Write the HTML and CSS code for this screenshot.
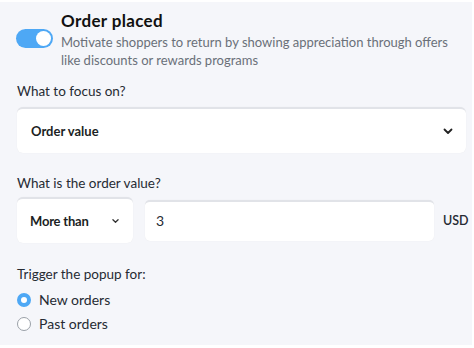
FILE: index.html
```html
<!DOCTYPE html>
<html>
<head>
<meta charset="utf-8">
<link rel="stylesheet" href="styles.css">
</head>
<body>
<div class="panel">
  <div class="header">
    <div class="toggle"><span class="knob"></span></div>
    <div class="head-text">
      <div class="title">Order placed</div>
      <div class="desc">Motivate shoppers to return by showing appreciation through offers like discounts or rewards programs</div>
    </div>
  </div>
  <div class="label l1">What to focus on?</div>
  <div class="select full">
    <span class="sel-text">Order value</span>
    <svg class="chev" width="10" height="7" viewBox="0 0 10 7"><path d="M1.5 1.5 L5 5 L8.5 1.5" fill="none" stroke="#222" stroke-width="1.8" stroke-linecap="round" stroke-linejoin="round"/></svg>
  </div>
  <div class="label l2">What is the order value?</div>
  <div class="row">
    <div class="select small">
      <span class="sel-text">More than</span>
      <svg class="chev" width="9" height="6" viewBox="0 0 10 7"><path d="M2 2 L5 5 L8 2" fill="none" stroke="#333" stroke-width="1.5" stroke-linecap="round" stroke-linejoin="round"/></svg>
    </div>
    <div class="input">3</div>
    <span class="usd">USD</span>
  </div>
  <div class="label l3">Trigger the popup for:</div>
  <div class="radio first"><span class="dot on"></span><span>New orders</span></div>
  <div class="radio"><span class="dot"></span><span>Past orders</span></div>
</div>
</body>
</html>
```
FILE: styles.css
```css
html, body { margin: 0; padding: 0; background: #fff; }
body { font-family: Lato, "Open Sans", sans-serif; color: #262b33; }
.panel {
  margin-top: 2px;
  width: 472px;
  height: 343px;
  background: #f5f6fa;
  box-sizing: border-box;
  padding: 8px 0 0 17px;
}
.header { display: flex; align-items: flex-start; }
.toggle {
  width: 37px; height: 19px; border-radius: 10px;
  background: #4ea8f5; margin-top: 19px; margin-left: -1px;
  position: relative; flex: none;
}
.knob {
  position: absolute; right: 2px; top: 2px;
  width: 15px; height: 15px; border-radius: 50%; background: #fff;
}
.head-text { margin-left: 8px; }
.title { font-weight: 700; font-size: 17px; line-height: 22px; color: #111; letter-spacing: 0.35px; }
.desc { font-size: 13px; line-height: 17.5px; color: #6a7079; margin-top: 2px; width: 395px; }
.label { font-size: 13.5px; line-height: 18px; color: #262b33; }
.l1 { margin-top: 13px; }
.l2 { margin-top: 21px; }
.l3 { margin-top: 22px; }
.select {
  background: #fff; border-radius: 6px; box-sizing: border-box;
  display: flex; align-items: center; justify-content: space-between;
  border-top: 2px solid #e1e3e8;
  box-shadow: 0 0 1px rgba(0,0,0,0.08);
  flex: none;
}
.full { width: 449px; height: 46px; margin-top: 7px; padding: 0 13px 0 14px; }
.sel-text { font-weight: 700; font-size: 13px; color: #1c1f24; }
.row { display: flex; align-items: center; margin-top: 5px; }
.small { width: 116px; height: 46px; padding: 0 13px 0 13px; }
.small .sel-text { letter-spacing: -0.2px; }
.input {
  flex: none;
  width: 289px; height: 41px; margin-left: 12px; background: #fff;
  border-radius: 5px; box-sizing: border-box;
  border-top: 2px solid #e1e3e8;
  box-shadow: 0 0 1px rgba(0,0,0,0.08);
  font-size: 14px; line-height: 38px; padding-left: 11px; color: #262b33;
}
.usd { margin-left: 9px; font-size: 12.5px; font-weight: 600; color: #262b33; }
.radio { display: flex; align-items: center; font-size: 14px; line-height: 18px; margin-top: 6px; }
.radio.first { margin-top: 8px; }
.dot {
  width: 14px; height: 14px; border-radius: 50%; box-sizing: border-box;
  border: 1px solid #9aa0a8; background: #fff; margin-right: 8px;
}
.dot.on { border: 4px solid #4ea8f5; }
```
